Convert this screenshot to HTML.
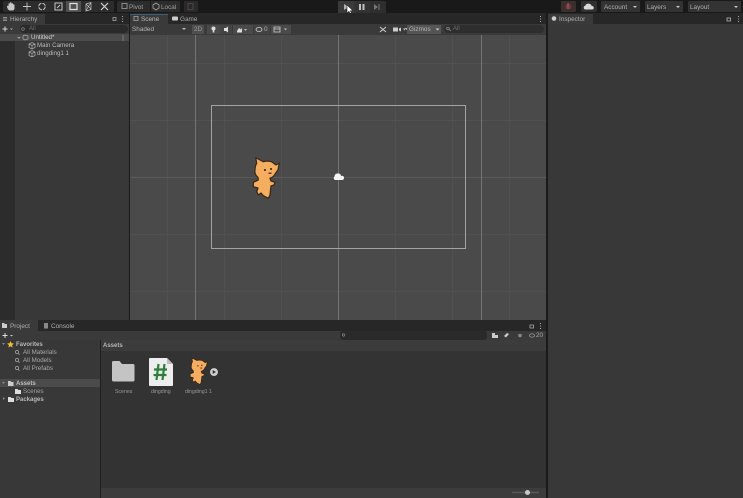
<!DOCTYPE html>
<html>
<head>
<meta charset="utf-8">
<style>
html,body{margin:0;padding:0;background:#222;}
#c{position:relative;width:743px;height:498px;overflow:hidden;}
#r{position:relative;width:743px;height:498px;overflow:hidden;background:#191919;font-family:"Liberation Sans",sans-serif;font-size:6px;color:#b0b0b0;filter:blur(.35px);}
#r div{position:absolute;}
.t{white-space:nowrap;line-height:8px;}
svg{position:absolute;overflow:visible;}
</style>
</head>
<body>
<div id="c"><div id="r">
<!-- toolbar -->
<div style="left:3px;top:1px;width:111px;height:11px;background:#2c2c2c;border-radius:1px"></div>
<div style="left:66px;top:1px;width:15px;height:11px;background:#505050"></div>
<svg style="left:0;top:0" width="120" height="13" fill="none" stroke="#c4c4c4" stroke-width="1">
<path d="M7 6.500c0-1 1.500-1 1.500 0V4c0-1 1.500-1 1.500 0V3c0-1 1.500-1 1.500 0v1c0-1 1.500-1 1.500 0v1c0-1 1.500-1 1.500 0v3.500c0 1-1 2-2 2H10c-1.500 0-3-2.500-3-4z" fill="#c8c8c8" stroke="none"/>
<path d="M27 2.500v8M23 6.500h8" stroke-width=".9"/>
<circle cx="42" cy="6.500" r="3.200" stroke-dasharray="4 1"/>
<path d="M55 3h7v7h-7zM57 8l3-3"/>
<path d="M70 3.500h7v6h-7z" stroke="#e0e0e0" stroke-width="1.200"/>
<path d="M86 4l5-1.500v7l-5 1.500zM86 4l5 5M91 2.500l-5 8" stroke-width=".7"/>
<path d="M101 3l7 7M108 3l-7 7" stroke-width="1.200" stroke="#d0d0d0"/>
</svg>
<div style="left:117px;top:1px;width:63px;height:11px;background:#2c2c2c;border-radius:1px"></div>
<div style="left:150px;top:1px;width:1px;height:11px;background:#1d1d1d"></div>
<div style="left:184px;top:1px;width:14px;height:11px;background:#2a2a2a;border-radius:1px"></div>
<svg style="left:0;top:0" width="200" height="13" fill="none" stroke="#a8a8a8" stroke-width=".8">
<path d="M122 3.500h5v5h-5z"/><path d="M153 5l3-2 3 2v3l-3 2-3-2z"/>
<path d="M188 3.500h5v6h-5z" stroke="#5a4a4a"/>
</svg>
<div class="t" style="left:129px;top:4px;color:#a0a0a0;font-size:6.400px">Pivot</div>
<div class="t" style="left:161px;top:4px;color:#a0a0a0;font-size:6.400px">Local</div>
<!-- play -->
<div style="left:338px;top:1px;width:48px;height:12px;background:#2e2e2e;border-radius:1px"></div>
<div style="left:338px;top:1px;width:16px;height:12px;background:#3a3a3a"></div>
<div style="left:354px;top:1px;width:16px;height:12px;background:#333"></div>
<svg style="left:338px;top:0" width="50" height="13" fill="#b0b0b0">
<path d="M6 4l5 3-5 3z"/>
<path d="M21 4h2v6h-2zM24.500 4h2v6h-2z" fill="#c0c0c0"/>
<path d="M36 4l4 3-4 3zM40.500 4h1v6h-1z" fill="#777"/>
</svg>
<svg style="left:346px;top:4px" width="8" height="12"><path d="M1 1v8l2-1.800 1.300 3 1.300-.6-1.300-2.800H7z" fill="#fff" stroke="#111" stroke-width=".5"/></svg>
<!-- right toolbar -->
<div style="left:561px;top:1px;width:15px;height:11px;background:#3a2e2e;border-radius:1px"></div>
<svg style="left:561px;top:1px" width="15" height="11"><circle cx="7.500" cy="5.500" r="3" fill="#6b3a3a"/><path d="M7 2v6" stroke="#b55" stroke-width="1"/></svg>
<div style="left:581px;top:1px;width:16px;height:11px;background:#303030;border-radius:1px"></div>
<svg style="left:581px;top:1px" width="16" height="11"><path d="M4 8.500a2 2 0 0 1 .2-3.800 3.500 3.500 0 0 1 6.500.3 1.800 1.800 0 0 1 .8 3.500z" fill="#d8d8d8"/></svg>
<div style="left:601px;top:1px;width:39px;height:11px;background:#333;border-radius:1px"></div>
<div class="t" style="left:604px;top:4px;font-size:6.400px">Account</div>
<div style="left:645px;top:1px;width:38px;height:11px;background:#333;border-radius:1px"></div>
<div class="t" style="left:647px;top:4px;font-size:6.400px">Layers</div>
<div style="left:688px;top:1px;width:53px;height:11px;background:#333;border-radius:1px"></div>
<div class="t" style="left:690px;top:4px;font-size:6.400px">Layout</div>
<svg style="left:0;top:0" width="743" height="13" fill="#c8c8c8"><path d="M633 6h4l-2 2zM676 6h4l-2 2zM734 6h4l-2 2z"/></svg>

<!-- Hierarchy -->
<div style="left:0;top:13px;width:129px;height:11px;background:#272727"></div>
<div style="left:0;top:14px;width:45px;height:10px;background:#3a3a3a"></div>
<div class="t" style="left:10px;top:16px;font-size:6.400px">Hierarchy</div>
<svg style="left:0;top:13px" width="129" height="11" fill="none" stroke="#aaa" stroke-width=".8"><path d="M3 4.500h4M3 6h4M3 7.500h4"/><path d="M113 4.500h3v3h-3z"/><path d="M122.500 3v1M122.500 5.500v1M122.500 8v1" stroke="#ccc"/></svg>
<div style="left:0;top:24px;width:129px;height:10px;background:#3a3a3a"></div>
<div style="left:20px;top:25px;width:108px;height:8px;background:#2a2a2a;border-radius:4px"></div>
<div class="t" style="left:29px;top:25px;color:#6d6d6d">All</div>
<svg style="left:0;top:24px" width="30" height="10" fill="none" stroke="#d8d8d8"><path d="M5 2.500v5M2.500 5h5" stroke-width="1"/><path d="M10 4.500h3l-1.500 1.500z" fill="#aaa" stroke="none"/><circle cx="23" cy="5" r="1.300" stroke="#999" stroke-width=".6"/></svg>
<div style="left:0;top:34px;width:129px;height:286px;background:#383838"></div>
<div style="left:0;top:34px;width:15px;height:286px;background:#2c2c2c"></div>
<div style="left:0;top:34px;width:129px;height:7px;background:#4b4b4b"></div>
<div class="t" style="left:31px;top:34px;color:#d0d0d0;font-size:6.200px">Untitled*</div>
<div class="t" style="left:37px;top:42px;color:#bcbcbc;font-size:6.200px">Main Camera</div>
<div class="t" style="left:37px;top:50px;color:#bcbcbc;font-size:6.200px">dingding1 1</div>
<svg style="left:0;top:34px" width="129" height="30" fill="none" stroke="#aaa" stroke-width=".7"><path d="M17 3l2 2 2-2z" fill="#999" stroke="none"/><path d="M23 2l2-1 3 1v3l-3 1-2-1z"/><path d="M123 1.500v1M123 3.500v1M123 5.500v1" stroke="#ccc"/><path d="M29 10l3-1.500 3 1.500v3.500l-3 1.500-3-1.500zM29 10l3 1.500 3-1.500M32 11.500v3.500"/><path d="M29 18l3-1.500 3 1.500v3.500l-3 1.500-3-1.500zM29 18l3 1.500 3-1.500M32 19.500v3.500"/></svg>
<div style="left:129px;top:13px;width:1px;height:307px;background:#1a1a1a"></div>

<!-- Scene -->
<div style="left:130px;top:13px;width:416px;height:11px;background:#272727"></div>
<div style="left:130px;top:14px;width:38px;height:10px;background:#3a3a3a;border-top:1px solid #3b5f7a;box-sizing:border-box"></div>
<div class="t" style="left:141px;top:16px;font-size:6.400px;color:#bcbcbc">Scene</div>
<div class="t" style="left:180px;top:16px;font-size:6.400px;color:#a8a8a8">Game</div>
<svg style="left:130px;top:13px" width="416" height="11" fill="none" stroke="#aaa" stroke-width=".8"><path d="M4 3.500h4v4H4z"/><rect x="42" y="3.500" width="6" height="4" rx="1" fill="#ccc" stroke="none"/><path d="M410.500 3v1M410.500 5.500v1M410.500 8v1" stroke="#ccc"/></svg>
<div style="left:130px;top:24px;width:416px;height:11px;background:#3a3a3a"></div>
<div class="t" style="left:132px;top:26px;font-size:6.400px;color:#b4b4b4">Shaded</div>
<svg style="left:130px;top:24px" width="416" height="11"><path d="M52 4h4l-2 2zM275 4h3l-1.500 2z" fill="#bbb"/></svg>
<div style="left:192px;top:25px;width:12px;height:9px;background:#4f4f4f"></div>
<div class="t" style="left:194px;top:26px;color:#999;font-size:6.400px">2D</div>
<div style="left:207px;top:25px;width:13px;height:9px;background:#4a4a4a"></div>
<div style="left:220px;top:25px;width:12px;height:9px;background:#444"></div>
<div style="left:233px;top:25px;width:20px;height:9px;background:#4a4a4a"></div>
<div style="left:254px;top:25px;width:16px;height:9px;background:#444"></div>
<div style="left:271px;top:25px;width:20px;height:9px;background:#4a4a4a"></div>
<svg style="left:200px;top:24px" width="100" height="11" fill="#ddd"><circle cx="13.500" cy="4.500" r="2"/><rect x="12.700" y="6" width="1.600" height="2.500"/><path d="M24 4h2l2-1.500v6L26 7h-2z"/><path d="M37 7l2-3 2 1.500 1-2v5h-5z"/><path d="M44 5h3l-1.500 2z" fill="#bbb"/><ellipse cx="59" cy="5.500" rx="3" ry="2" fill="none" stroke="#ccc" stroke-width=".8"/><path d="M74 3h6v5h-6z" fill="none" stroke="#ccc" stroke-width=".8"/><path d="M74 5h6" stroke="#ccc" stroke-width=".8"/><path d="M84 4.500h3l-1.500 2z" fill="#bbb"/></svg>
<div class="t" style="left:264px;top:26px;font-size:6.400px;color:#aaa">0</div>
<svg style="left:378px;top:24px" width="70" height="11" fill="none" stroke="#ccc" stroke-width="1"><path d="M2 3l6 5M8 3L2 8"/><rect x="15" y="3.500" width="5" height="4" fill="#ccc" stroke="none"/><path d="M21 4.500l2-1v4l-2-1z" fill="#ccc" stroke="none"/><path d="M25 4.500h3l-1.500 2z" fill="#bbb" stroke="none"/></svg>
<div style="left:407px;top:25px;width:34px;height:9px;background:#555"></div>
<div class="t" style="left:409px;top:26px;color:#b4b4b4;font-size:6.400px">Gizmos</div>
<svg style="left:434px;top:25px" width="8" height="9"><path d="M1.500 3.500h4l-2 2z" fill="#ccc"/></svg>
<div style="left:444px;top:25px;width:100px;height:8px;background:#2e2e2e;border-radius:4px"></div>
<div class="t" style="left:453px;top:25px;color:#6d6d6d">All</div>
<svg style="left:444px;top:25px" width="10" height="8" fill="none" stroke="#999" stroke-width=".7"><circle cx="4" cy="3.500" r="1.300"/><path d="M5 4.500l2 1.500"/></svg>

<!-- Scene view -->
<div style="left:130px;top:35px;width:416px;height:285px;background:#4a4a4a"></div>
<svg style="left:130px;top:35px" width="416" height="285">
<g stroke="#505050" stroke-width="1">
<path d="M37.500 0V285M94.500 0V285M151.500 0V285M265.500 0V285M322.500 0V285M379.500 0V285"/>
<path d="M0 28.500H416M0 85.500H416M0 199.500H416M0 256.500H416"/>
</g>
<path d="M0 142.500H416" stroke="#5a5a5a" stroke-width="1"/>
<path d="M65.500 0V285M208.500 0V285M351.500 0V285" stroke="#747474" stroke-width="1"/>
<rect x="81.500" y="70.500" width="254" height="143" fill="none" stroke="#a4a4a4" stroke-width="1"/>
</svg>
<!-- scene cat -->
<svg style="left:250px;top:155px" width="34" height="46" viewBox="0 0 34 46">
<path d="M5.700 2.700L13.300 6.700Q17 5.500 21.700 6.700L26 10L29.300 8L28 15L25.700 18Q24 22 20 23.300L21 26L25 27.300L24 30L21 31L20 40L18.300 43.300L13.300 40.700L11 38L8.300 40L6.700 36.700L8 33L3.300 31.700L3.300 27.300L8.300 25L8 22.500Q4 19 5 15Q5 11 6.700 8.300Z" fill="#f5ad60" stroke="#3a2a18" stroke-width="1.300" stroke-linejoin="round"/>
<circle cx="15" cy="15" r="1" fill="#221"/><circle cx="21" cy="14" r="1" fill="#221"/>
<path d="M18.500 17.500h3v1.500h-3z" fill="#6a3a20"/>
</svg>
<svg style="left:332px;top:172px" width="14" height="10"><path d="M3 8a2 2 0 0 1-.500-3.500A3 3 0 0 1 6 1.500 2.500 2.500 0 0 1 9 4a2 2 0 0 1 3 2c0 1.500-1 2-2 2z" fill="#f4f4f4"/></svg>
<div style="left:546px;top:13px;width:2px;height:485px;background:#1a1a1a"></div>

<!-- Inspector -->
<div style="left:548px;top:13px;width:195px;height:11px;background:#272727"></div>
<div style="left:548px;top:14px;width:45px;height:10px;background:#3a3a3a"></div>
<div class="t" style="left:559px;top:16px;font-size:6.400px">Inspector</div>
<svg style="left:548px;top:13px" width="195" height="11" fill="none" stroke="#bbb" stroke-width=".8"><circle cx="6" cy="5.500" r="2.300" fill="#ccc" stroke="none"/><path d="M179 5h3.500v3H179z"/><path d="M190.500 3v1M190.500 5.500v1M190.500 8v1" stroke="#ccc"/></svg>
<div style="left:548px;top:24px;width:195px;height:474px;background:#383838"></div>

<!-- Project -->
<div style="left:0;top:320px;width:546px;height:11px;background:#272727"></div>
<div style="left:0;top:320px;width:38px;height:11px;background:#3a3a3a"></div>
<div class="t" style="left:10px;top:323px;font-size:6.400px">Project</div>
<div class="t" style="left:51px;top:323px;font-size:6.400px">Console</div>
<svg style="left:0;top:320px" width="546" height="11" fill="none" stroke="#aaa" stroke-width=".8"><path d="M2 3h2l1 1h2v4H2z" fill="#ccc" stroke="none"/><path d="M44 3h4v5.500h-4z" fill="#888" stroke="none"/><path d="M530 5h3.500v3H530z"/><path d="M540.500 3v1M540.500 5.500v1M540.500 8v1" stroke="#ccc"/></svg>
<div style="left:0;top:331px;width:546px;height:9px;background:#3a3a3a"></div>
<div style="left:340px;top:331px;width:147px;height:9px;background:#2a2a2a;border-radius:3px"></div>
<svg style="left:0;top:331px" width="546" height="9" fill="#ccc"><path d="M5 2v5M2.500 4.500h5" stroke="#ddd" stroke-width="1" fill="none"/><path d="M10 4h3l-1.500 1.500z"/><circle cx="343.500" cy="4" r="1.200" fill="none" stroke="#999" stroke-width=".6"/><rect x="492" y="2" width="3" height="5"/><rect x="495" y="4" width="3" height="3"/><path d="M504 5l3-3 2 1-3 3.500z"/><circle cx="520" cy="4.500" r="1.800" fill="#888"/><ellipse cx="532" cy="4.500" rx="2.500" ry="1.700" fill="none" stroke="#aaa" stroke-width=".7"/></svg>
<div class="t" style="left:536px;top:332px;font-size:6.400px;color:#aaa">20</div>

<!-- Project left -->
<div style="left:0;top:340px;width:100px;height:158px;background:#383838"></div>
<div style="left:0;top:379px;width:100px;height:8px;background:#4b4b4b"></div>
<div style="left:100px;top:340px;width:1px;height:158px;background:#1f1f1f"></div>
<div class="t" style="left:16px;top:341px;font-weight:bold;color:#b8b8b8;font-size:6px">Favorites</div>
<div class="t" style="left:23px;top:349px;font-size:6.200px;color:#a8a8a8">All Materials</div>
<div class="t" style="left:23px;top:357px;font-size:6.200px;color:#a8a8a8">All Models</div>
<div class="t" style="left:23px;top:365px;font-size:6.200px;color:#a8a8a8">All Prefabs</div>
<div class="t" style="left:16px;top:380px;font-weight:bold;color:#c0c0c0;font-size:6px">Assets</div>
<div class="t" style="left:23px;top:388px;color:#a0a0a0;font-size:6.200px">Scenes</div>
<div class="t" style="left:16px;top:396px;font-weight:bold;color:#b8b8b8;font-size:6px">Packages</div>
<svg style="left:0;top:340px" width="40" height="65" fill="none" stroke="#aaa" stroke-width=".7">
<path d="M2 3h3l-1.500 2zM2 42h3l-1.500 2z" fill="#888" stroke="none"/><path d="M3 57l2 1.500-2 1.500z" fill="#888" stroke="none"/>
<path d="M10.500 1l1 2.200 2.400.3-1.800 1.600.5 2.400-2.100-1.200-2.100 1.200.5-2.400-1.800-1.600 2.400-.3z" fill="#f0c030" stroke="none"/>
<circle cx="17" cy="12" r="1.600"/><path d="M18 13.200l1.500 1.500"/>
<circle cx="17" cy="20" r="1.600"/><path d="M18 21.200l1.500 1.500"/>
<circle cx="17" cy="28" r="1.600"/><path d="M18 29.200l1.500 1.500"/>
<path d="M8 41h2.500l1 1h2v4H8z" fill="#ccc" stroke="none"/>
<path d="M15 49h2.500l1 1h2.500v4h-6z" fill="#ddd" stroke="none"/>
<path d="M8 57h2.500l1 1h2.500v4H8z" fill="#ddd" stroke="none"/>
</svg>

<!-- Project right -->
<div style="left:101px;top:340px;width:445px;height:11px;background:#3c3c3c"></div>
<div class="t" style="left:103px;top:342px;font-weight:bold;color:#b4b4b4;font-size:6px">Assets</div>
<div style="left:101px;top:351px;width:445px;height:137px;background:#333"></div>
<div style="left:101px;top:488px;width:445px;height:10px;background:#3c3c3c"></div>
<svg style="left:510px;top:488px" width="34" height="10"><path d="M2 4.500h27" stroke="#585858" stroke-width="1.500"/><circle cx="17.500" cy="4.500" r="2.500" fill="#c8c8c8"/></svg>
<svg style="left:110px;top:358px" width="110" height="30">
<path d="M2 4.500a1.500 1.500 0 0 1 1.500-1.500h6l2.500 3h11a1.500 1.500 0 0 1 1.500 1.500v14.500a1.500 1.500 0 0 1-1.500 1.500H3.500A1.500 1.500 0 0 1 2 22z" fill="#c4c4c4"/>
<path d="M40 0h17l6 6v21a1 1 0 0 1-1 1H40a1 1 0 0 1-1-1V1a1 1 0 0 1 1-1z" fill="#ededed"/>
<path d="M57 0l6 6h-6z" fill="#bcbcbc"/>
<path d="M48.500 6l-2 16M54.500 6l-2 16M44 11.500h13M43.500 17h13" stroke="#2e7d3c" stroke-width="2.200" fill="none"/>
</svg>
<!-- asset cat -->
<svg style="left:188px;top:356px" width="34" height="32" viewBox="0 0 51.500 48.500">
<path d="M5.700 2.700L13.300 6.700Q17 5.500 21.700 6.700L26 10L29.300 8L28 15L25.700 18Q24 22 20 23.300L21 26L25 27.300L24 30L21 31L20 40L18.300 43.300L13.300 40.700L11 38L8.300 40L6.700 36.700L8 33L3.300 31.700L3.300 27.300L8.300 25L8 22.500Q4 19 5 15Q5 11 6.700 8.300Z" fill="#f5ad60" stroke="#3a2a18" stroke-width="1.300" stroke-linejoin="round"/>
<circle cx="15" cy="15" r="1" fill="#221"/><circle cx="21" cy="14" r="1" fill="#221"/>
<path d="M18.500 17.500h3v1.500h-3z" fill="#6a3a20"/>
<circle cx="39.400" cy="24.300" r="6" fill="#cfcfcf"/><path d="M37.400 21.300l5 3-5 3z" fill="#333"/>
</svg>
<div class="t" style="left:115px;top:388px;font-size:5.200px;color:#999">Scenes</div>
<div class="t" style="left:151px;top:388px;font-size:5.200px;color:#999">dingding</div>
<div class="t" style="left:185px;top:388px;font-size:5.200px;color:#999">dingding1 1</div>
</div></div>
</body>
</html>
